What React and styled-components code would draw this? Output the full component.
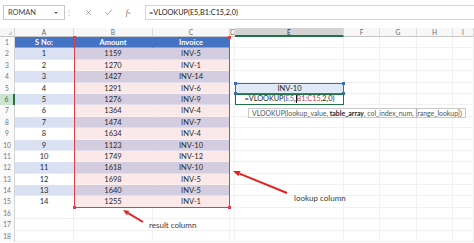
import React from "react";
import styled, { createGlobalStyle } from "styled-components";
import { X, Check } from "lucide-react";

const GlobalStyle = createGlobalStyle`
  html, body { margin: 0; padding: 0; background: #fff; }
  body { font-family: Lato, "Open Sans", sans-serif; }
`;

const COLS = [15, 59, 79, 77, 5, 109, 36, 37, 36, 21];
const LETTERS = ["A", "B", "C", "D", "E", "F", "G", "H", "I"];
const ROW_H = 11.4;

const data = [
  [1, 1159, "INV-5"],
  [2, 1270, "INV-1"],
  [3, 1427, "INV-14"],
  [4, 1291, "INV-6"],
  [5, 1276, "INV-9"],
  [6, 1364, "INV-4"],
  [7, 1474, "INV-7"],
  [8, 1634, "INV-4"],
  [9, 1123, "INV-10"],
  [10, 1749, "INV-12"],
  [11, 1618, "INV-10"],
  [12, 1698, "INV-5"],
  [13, 1640, "INV-5"],
  [14, 1255, "INV-1"],
];

const Frame = styled.div`
  width: 474px;
  height: 243px;
  overflow: hidden;
  position: relative;
  background: #fff;
`;

const TopBar = styled.div`
  height: 28px;
  box-sizing: border-box;
  padding: 5px 0 0 3px;
  display: flex;
  align-items: flex-start;
`;

const NameBox = styled.div`
  width: 62px;
  height: 15px;
  box-sizing: border-box;
  border: 1px solid #c9c9c9;
  display: flex;
  align-items: center;
  justify-content: space-between;
  padding: 0 6px 0 4px;
  font-size: 7.4px;
  color: #444;
`;

const Caret = styled.span`
  width: 0;
  height: 0;
  border-left: 2px solid transparent;
  border-right: 2px solid transparent;
  border-top: 2.5px solid #666;
`;

const Dots = styled.span`
  width: 6px;
  text-align: center;
  color: #b5b5b5;
  font-size: 8px;
  line-height: 15px;
`;

const IconGroup = styled.div`
  display: flex;
  margin-left: 7px;
`;

const IconBtn = styled.span`
  width: 20px;
  height: 15px;
  display: flex;
  align-items: center;
  justify-content: center;
  color: #666;
  font-family: "Liberation Serif", serif;
  font-style: italic;
  font-size: 8px;
  sub { font-size: 5px; }
`;

const FormulaBox = styled.div`
  flex: 1;
  margin-left: 7px;
  height: 15px;
  box-sizing: border-box;
  border: 1px solid #d6d6d6;
  border-right: none;
  padding-left: 3px;
  font-size: 7.3px;
  line-height: 13px;
  color: #222;
`;

const Sheet = styled.div`
  position: relative;
  display: grid;
  grid-template-columns: ${COLS.map((c) => c + "px").join(" ")};
  grid-template-rows: 9px repeat(18, ${ROW_H}px);
`;

const Corner = styled.div`
  position: relative;
  background: #f6f6f6;
  border-right: 1px solid #d4d4d4;
  border-bottom: 1px solid #c6c6c6;
  &::after {
    content: "";
    position: absolute;
    right: 2px;
    bottom: 1px;
    border-left: 4px solid transparent;
    border-bottom: 4px solid #d0d0d0;
  }
`;

const ColHead = styled.div`
  background: ${(p) => (p.$selected ? "#d3d3d3" : "#f7f7f7")};
  border-right: 1px solid #dcdcdc;
  border-bottom: ${(p) => (p.$selected ? "2px solid #217346" : "1px solid #c6c6c6")};
  box-sizing: border-box;
  font-size: 6.6px;
  line-height: 9px;
  text-align: center;
  color: ${(p) => (p.$selected ? "#333" : "#6a6a6a")};
  overflow: hidden;
`;

const RowNum = styled.div`
  background: ${(p) => (p.$selected ? "#cfe3d2" : "#fafafa")};
  border-right: ${(p) => (p.$selected ? "2px solid #217346" : "1px solid #d4d4d4")};
  box-sizing: border-box;
  font-size: 6.6px;
  line-height: ${ROW_H}px;
  text-align: center;
  color: ${(p) => (p.$selected ? "#217346" : "#777")};
`;

const Cell = styled.div`
  background: ${(p) => p.$bg || "#fff"};
  color: ${(p) => p.$color || "#2a2a2a"};
  font-weight: ${(p) => (p.$bold ? 700 : 400)};
  font-size: 7.5px;
  line-height: ${ROW_H}px;
  text-align: center;
  white-space: nowrap;
  box-sizing: border-box;
  border-right: 1px solid ${(p) => (p.$bg ? "transparent" : "#f1f1f1")};
  border-bottom: 1px solid ${(p) => (p.$bg ? "rgba(255,255,255,0.35)" : "#f1f1f1")};
`;

const LookupCell = styled.div`
  position: relative;
  background: #dfeaf6;
  border: 1px solid #3e6db5;
  box-sizing: border-box;
  font-size: 7.5px;
  line-height: 9.4px;
  text-align: center;
  color: #222;
`;

const Handle = styled.span`
  position: absolute;
  width: 3px;
  height: 3px;
  background: ${(p) => p.$color};
  ${(p) => (p.$top ? "top: -2px;" : "bottom: -2px;")}
  ${(p) => (p.$left ? "left: -2px;" : "right: -2px;")}
`;

const ActiveCell = styled.div`
  position: relative;
  border: 1.5px solid #217346;
  box-sizing: border-box;
  font-size: 7.3px;
  line-height: 8.6px;
  text-align: center;
  color: #222;
  white-space: nowrap;
`;

const Ref = styled.span`
  color: ${(p) => p.$color};
`;

const Cursor = styled.span`
  display: inline-block;
  width: 0;
  height: 8px;
  border-left: 1px solid #111;
  vertical-align: -2px;
`;

const RangeBox = styled.div`
  position: absolute;
  left: 74px;
  top: 9px;
  width: 156px;
  height: ${ROW_H * 15}px;
  box-sizing: border-box;
  border: 1px solid #d8404c;
  pointer-events: none;
`;

const Tooltip = styled.div`
  position: absolute;
  left: 248px;
  top: 80px;
  height: 10px;
  padding: 0 3px;
  box-sizing: border-box;
  border: 1px solid #c9c9c9;
  background: #fff;
  font-size: 6.9px;
  line-height: 8px;
  color: #555;
  white-space: nowrap;
  b { color: #222; }
`;

const Note = styled.div`
  position: absolute;
  left: ${(p) => p.$x}px;
  top: ${(p) => p.$y}px;
  font-size: 8px;
  color: #3a3a3a;
  white-space: nowrap;
`;

const Overlay = styled.svg`
  position: absolute;
  left: 0;
  top: 0;
  pointer-events: none;
`;

function tableCell(row, col) {
  // row 1 is the blue header, rows 2..15 are the data
  if (row === 1) {
    const head = ["S No:", "Amount", "Invoice"][col - 1];
    return <Cell key={`${row}-${col}`} $bg="#4472c4" $color="#fff" $bold>{head}</Cell>;
  }
  const r = data[row - 2];
  const even = row % 2 === 0;
  let bg;
  if (col === 1) bg = even ? "#d9e1f2" : "#ffffff";
  else bg = even ? "#d4cde0" : "#fbe8e9";
  return (
    <Cell key={`${row}-${col}`} $bg={bg}>
      {r[col - 1]}
    </Cell>
  );
}

export default function App() {
  const cells = [];
  cells.push(<Corner key="corner" />);
  LETTERS.forEach((l) => cells.push(<ColHead key={l} $selected={l === "E"}>{l}</ColHead>));

  for (let row = 1; row <= 18; row++) {
    cells.push(<RowNum key={`n${row}`} $selected={row === 6}>{row}</RowNum>);
    for (let col = 1; col <= 9; col++) {
      if (row <= 15 && col <= 3) {
        cells.push(tableCell(row, col));
      } else if (row === 5 && col === 5) {
        cells.push(
          <LookupCell key="e5">
            INV-10
            <Handle $color="#3e6db5" $top $left />
            <Handle $color="#3e6db5" $top />
            <Handle $color="#3e6db5" $left />
            <Handle $color="#3e6db5" />
          </LookupCell>
        );
      } else if (row === 6 && col === 5) {
        cells.push(
          <ActiveCell key="e6">
            =VLOOKUP(<Ref $color="#3e6db5">E5</Ref>,<Cursor />
            <Ref $color="#c8373f">B1:C15</Ref>,2,0)
          </ActiveCell>
        );
      } else {
        cells.push(<Cell key={`${row}-${col}`} />);
      }
    }
  }

  return (
    <Frame>
      <GlobalStyle />
      <TopBar>
        <NameBox>
          ROMAN
          <Caret />
        </NameBox>
        <Dots>⋮</Dots>
        <IconGroup>
          <IconBtn>
            <X size={9} strokeWidth={1.4} />
          </IconBtn>
          <IconBtn>
            <Check size={9} strokeWidth={1.6} />
          </IconBtn>
          <IconBtn>
            f<sub>x</sub>
          </IconBtn>
        </IconGroup>
        <FormulaBox>=VLOOKUP(E5,B1:C15,2,0)</FormulaBox>
      </TopBar>
      <Sheet>
        {cells}
        <RangeBox>
          <Handle $color="#d8404c" $top $left />
          <Handle $color="#d8404c" $top />
          <Handle $color="#d8404c" $left />
          <Handle $color="#d8404c" />
        </RangeBox>
        <Tooltip>
          VLOOKUP(lookup_value, <b>table_array</b>, col_index_num, [range_lookup])
        </Tooltip>
      </Sheet>
      <Overlay width="474" height="243" viewBox="0 0 474 243">
        <line x1="287" y1="193" x2="239.5" y2="173.6" stroke="#e02424" strokeWidth="2" />
        <polygon points="233,171 240.6,171 238.4,176.2" fill="#e02424" />
        <line x1="143" y1="222" x2="128.1" y2="213.1" stroke="#e02424" strokeWidth="2" />
        <polygon points="123,210 129.4,211 126.8,215.2" fill="#e02424" />
      </Overlay>
      <Note $x={294} $y={193}>lookup column</Note>
      <Note $x={149} $y={220}>result column</Note>
    </Frame>
  );
}
